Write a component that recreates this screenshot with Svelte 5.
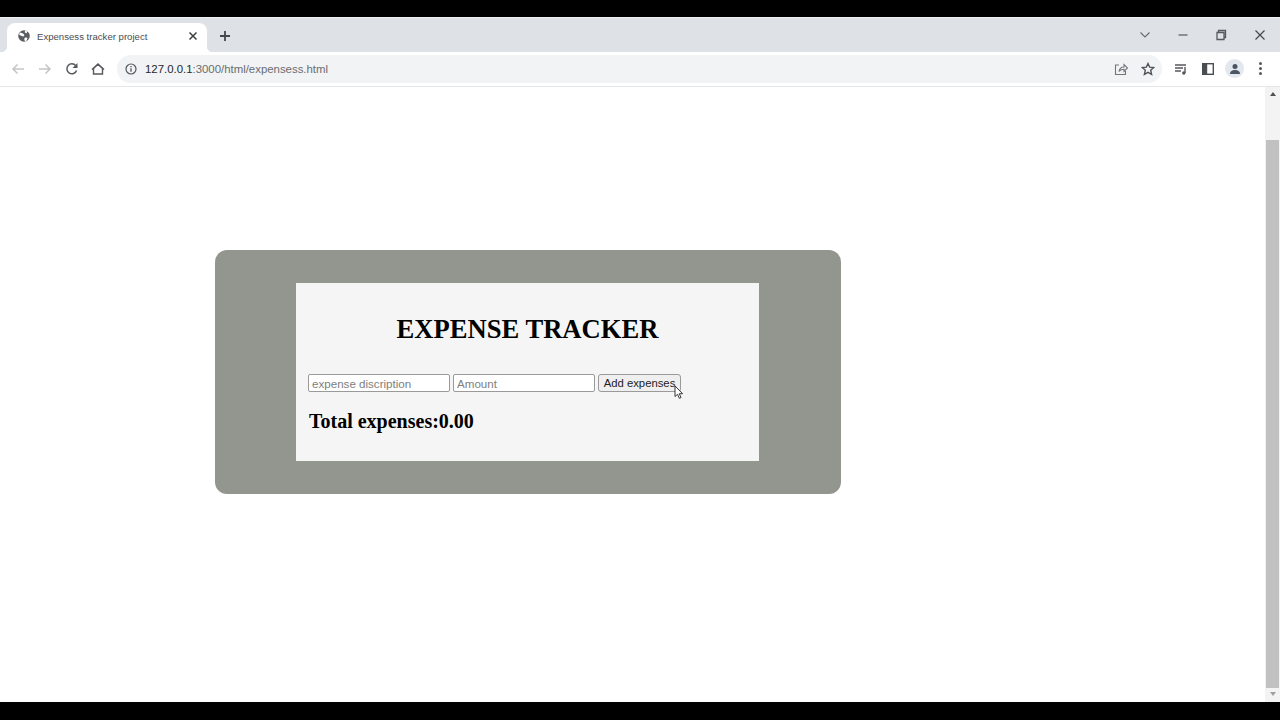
<script>
  let description = '';
  let amount = '';
  let total = 0;

  function addExpense() {
    const n = parseFloat(amount);
    if (!isNaN(n)) total += n;
    description = '';
    amount = '';
  }
</script>

<div class="screen">
  <div class="letterbox top"></div>

  <div class="tabstrip">
    <div class="tab">
      <svg class="globe" viewBox="0 0 12 12" width="12" height="12">
        <circle cx="6" cy="6" r="5.8" fill="#5a5e63" />
        <path d="M2 2.500l3 1 1.500 1.500-1 1.500-2-.5-2.500-1.500zM7 7.500l2.500.2-.8 2.800-1.700 1-.8-2.500zM7 .6l2.500 1-1 1.600-1.700-.8z" fill="#fff" />
      </svg>
      <span class="tab-title">Expensess tracker project</span>
      <svg class="tab-x" viewBox="0 0 10 10" width="10" height="10">
        <path d="M1.500 1.500l7 7M8.500 1.500l-7 7" stroke="#3c4043" stroke-width="1.500" fill="none" />
      </svg>
    </div>
    <svg class="plus" viewBox="0 0 12 12" width="12" height="12">
      <path d="M6 1v10M1 6h10" stroke="#44474b" stroke-width="1.800" fill="none" />
    </svg>
    <div class="window-controls">
      <svg viewBox="0 0 12 12" width="12" height="12" class="chev">
        <path d="M1.500 3.500L6 8l4.500-4.500" stroke="#6a6d71" stroke-width="1.200" fill="none" />
      </svg>
      <svg viewBox="0 0 12 12" width="12" height="12" class="min">
        <path d="M1.500 6h9" stroke="#55585c" stroke-width="1.200" fill="none" />
      </svg>
      <svg viewBox="0 0 12 12" width="12" height="12" class="max">
        <path d="M2 3.500h7v7H2zM3.500 3.500V1.500h7v7H9" stroke="#55585c" stroke-width="1.300" fill="none" />
      </svg>
      <svg viewBox="0 0 12 12" width="12" height="12" class="close">
        <path d="M1.500 1.500l9 9M10.500 1.500l-9 9" stroke="#44474b" stroke-width="1.200" fill="none" />
      </svg>
    </div>
  </div>

  <div class="toolbar">
    <svg class="nav" viewBox="0 0 14 14" width="14" height="14">
      <path d="M13 7H2M6.500 2.500L2 7l4.500 4.500" stroke="#c3c5c8" stroke-width="1.500" fill="none" />
    </svg>
    <svg class="nav" viewBox="0 0 14 14" width="14" height="14">
      <path d="M1 7h11M7.500 2.500L12 7l-4.500 4.500" stroke="#c3c5c8" stroke-width="1.500" fill="none" />
    </svg>
    <svg class="nav" viewBox="0 0 14 14" width="14" height="14">
      <path d="M11.600 8.500A5 5 0 1 1 10.800 3.600" stroke="#55585c" stroke-width="1.500" fill="none" />
      <path d="M12.500 1v5h-5z" fill="#55585c" />
    </svg>
    <svg class="nav home" viewBox="0 0 14 14" width="14" height="14">
      <path d="M2.500 6.500L7 2.300l4.500 4.200v5.500h-9zM1 7.500L7 2l6 5.500" stroke="#55585c" stroke-width="1.400" fill="none" />
    </svg>

    <div class="omnibox">
      <svg viewBox="0 0 12 12" width="12" height="12">
        <circle cx="6" cy="6" r="5" stroke="#55585c" stroke-width="1.200" fill="none" />
        <path d="M6 5.300v3.400M6 3v1.300" stroke="#55585c" stroke-width="1.300" />
      </svg>
      <span class="url"><span class="host">127.0.0.1</span>:3000/html/expensess.html</span>
      <div class="omni-actions">
        <svg viewBox="0 0 14 14" width="14" height="14">
          <path d="M5 3H1.500v9.500h10V9M5 9.500C5.500 6.500 7.500 5 10 5V2.500L13.500 6 10 9.500V7.300c-2 0-3.800.6-5 2.200z" stroke="#72757a" stroke-width="1.100" fill="none" />
        </svg>
        <svg viewBox="0 0 14 14" width="14" height="14">
          <path d="M7 1.500l1.700 3.700 4 .4-3 2.700.9 4L7 10.300l-3.600 2 .9-4-3-2.700 4-.4z" stroke="#4f5256" stroke-width="1.400" fill="none" />
        </svg>
      </div>
    </div>

    <div class="extensions">
      <svg class="media" viewBox="0 0 14 14" width="14" height="14">
        <path d="M1 3h11M1 6h8M1 9h6" stroke="#55585c" stroke-width="1.400" fill="none" />
        <path d="M11 5v6" stroke="#55585c" stroke-width="1.400" />
        <circle cx="9.800" cy="11" r="1.700" fill="#55585c" />
      </svg>
      <svg class="panel" viewBox="0 0 12 12" width="12" height="12">
        <rect x=".7" y=".7" width="10.600" height="10.600" fill="none" stroke="#4a4d51" stroke-width="1.400" />
        <rect x=".7" y=".7" width="4.500" height="10.600" fill="#4a4d51" />
      </svg>
      <div class="avatar">
        <svg viewBox="0 0 12 12" width="12" height="12">
          <circle cx="6" cy="3.600" r="2.500" fill="#4b5563" />
          <path d="M1 11c0-3 2.500-4 5-4s5 1 5 4z" fill="#4b5563" />
        </svg>
      </div>
      <div class="dots"><span></span><span></span><span></span></div>
    </div>
  </div>

  <div class="viewport">
    <main class="page">
      <section class="card">
        <div class="tracker">
          <h1>EXPENSE TRACKER</h1>
          <form class="entry" on:submit|preventDefault={addExpense}>
            <input type="text" placeholder="expense discription" bind:value={description} />
            <input type="text" placeholder="Amount" bind:value={amount} />
            <button type="submit">Add expenses</button>
            <svg class="cursor" viewBox="0 0 10 15" width="10" height="15">
              <path d="M1 1v10.500l2.600-2.200 1.700 4 1.700-.7-1.700-3.900h3.300z" fill="#fff" stroke="#222" stroke-width=".9" />
            </svg>
          </form>
          <h2>Total expenses:{total.toFixed(2)}</h2>
        </div>
      </section>
    </main>
    <div class="scrollbar">
      <span class="arrow up"></span>
      <div class="thumb"></div>
      <span class="arrow down"></span>
    </div>
  </div>

  <div class="letterbox bottom"></div>
</div>

<style>
  :global(body) {
    margin: 0;
    background: #000;
  }

  .screen {
    width: 1280px;
    height: 720px;
    display: flex;
    flex-direction: column;
    overflow: hidden;
    font-family: "Liberation Sans", Arial, sans-serif;
  }

  .letterbox {
    background: #000;
    flex: none;
  }
  .letterbox.top { height: 17px; }
  .letterbox.bottom { height: 18px; }

  .tabstrip {
    height: 35px;
    flex: none;
    box-sizing: border-box;
    padding: 5px 0 0 7px;
    background: #dee1e6;
    border-top: 1px solid #eef0f2;
    display: flex;
    align-items: flex-start;
  }

  .tab {
    position: relative;
    width: 200px;
    height: 29px;
    box-sizing: border-box;
    padding: 0 9px 3px 11px;
    background: #fff;
    border-radius: 8px 8px 0 0;
    display: flex;
    align-items: center;
    gap: 7px;
  }

  .tab::before,
  .tab::after {
    content: '';
    position: absolute;
    bottom: 0;
    width: 6px;
    height: 6px;
  }
  .tab::before {
    left: -6px;
    background: radial-gradient(circle at 0 0, transparent 6px, #fff 6.500px);
  }
  .tab::after {
    right: -6px;
    background: radial-gradient(circle at 100% 0, transparent 6px, #fff 6.500px);
  }

  .tab-title {
    flex: 1;
    font-size: 9.600px;
    color: #4a4d51;
  }

  .plus {
    margin: 7px 0 0 12px;
  }

  .window-controls {
    margin-left: auto;
    height: 24px;
    display: flex;
    align-items: center;
  }
  .window-controls .chev { margin-right: 26px; }
  .window-controls .min { margin-right: 26px; }
  .window-controls .max { margin-right: 27px; }
  .window-controls .close { margin-right: 14px; }

  .toolbar {
    height: 35px;
    flex: none;
    box-sizing: border-box;
    padding: 0 0 1px 11px;
    background: #fff;
    border-bottom: 1px solid #e4e6e9;
    display: flex;
    align-items: center;
    gap: 13px;
  }

  .home { margin-left: -1px; }

  .omnibox {
    width: 1045px;
    height: 28px;
    box-sizing: border-box;
    margin-left: -1px;
    padding: 0 7px 0 8px;
    border-radius: 14px;
    background: #f1f3f4;
    display: flex;
    align-items: center;
    gap: 8px;
  }

  .url {
    font-size: 11.400px;
    color: #6a6d71;
  }
  .host { color: #26282b; }

  .omni-actions {
    margin-left: auto;
    display: flex;
    gap: 13px;
  }

  .extensions {
    display: flex;
    align-items: center;
    margin-left: -1px;
  }
  .media { margin-right: 14px; }
  .panel { margin-right: 11px; }

  .avatar {
    width: 19px;
    height: 19px;
    border-radius: 50%;
    background: #e3e7ee;
    display: flex;
    align-items: center;
    justify-content: center;
    margin-right: 15px;
  }

  .dots {
    display: flex;
    flex-direction: column;
    gap: 2px;
  }
  .dots span {
    width: 3px;
    height: 3px;
    border-radius: 50%;
    background: #55585c;
  }

  .viewport {
    flex: 1;
    display: flex;
    min-height: 0;
    background: #fff;
  }

  .page {
    flex: 1;
    box-sizing: border-box;
    padding: 163px 0 0 215px;
  }

  .card {
    width: 626px;
    height: 244px;
    box-sizing: border-box;
    padding: 33px 82px 33px 81px;
    background: #93968f;
    border-radius: 12px;
  }

  .tracker {
    height: 178px;
    box-sizing: border-box;
    padding: 30px 12px 0;
    background: #f5f5f5;
    color: #000;
    font-family: "Liberation Serif", "Times New Roman", serif;
  }

  h1 {
    margin: 0;
    font-size: 26.600px;
    line-height: 32px;
    text-align: center;
    font-weight: bold;
  }

  .entry {
    position: relative;
    margin-top: 29px;
    display: flex;
    gap: 3px;
    height: 18px;
  }

  input {
    width: 142px;
    height: 18px;
    box-sizing: border-box;
    padding: 0 3px;
    border: 1px solid #9a9a9a;
    border-radius: 2px;
    background: #fff;
    font-family: "Liberation Sans", Arial, sans-serif;
    font-size: 11.600px;
    outline: none;
  }
  input::placeholder { color: #808080; }

  button {
    width: 83px;
    height: 18px;
    box-sizing: border-box;
    padding: 0;
    border: 1px solid #9a9a9a;
    border-radius: 3px;
    background: #efefef;
    color: #222;
    font-family: "Liberation Sans", Arial, sans-serif;
    font-size: 11.300px;
    white-space: nowrap;
  }

  .cursor {
    position: absolute;
    left: 366px;
    top: 11px;
  }

  h2 {
    margin: 17px 0 0 1px;
    font-size: 20px;
    line-height: 24px;
    font-weight: bold;
  }

  .scrollbar {
    width: 15px;
    flex: none;
    background: #f3f3f3;
    display: flex;
    flex-direction: column;
    align-items: center;
  }

  .thumb {
    width: 13px;
    height: 548px;
    margin-top: 44px;
    background: #c1c1c1;
    flex: none;
  }

  .arrow {
    width: 0;
    height: 0;
    border-left: 3.500px solid transparent;
    border-right: 3.500px solid transparent;
    flex: none;
  }
  .arrow.up {
    margin-top: 5px;
    border-bottom: 4px solid #505050;
  }
  .arrow.down {
    margin-top: 4px;
    border-top: 4px solid #a0a0a0;
  }
</style>
